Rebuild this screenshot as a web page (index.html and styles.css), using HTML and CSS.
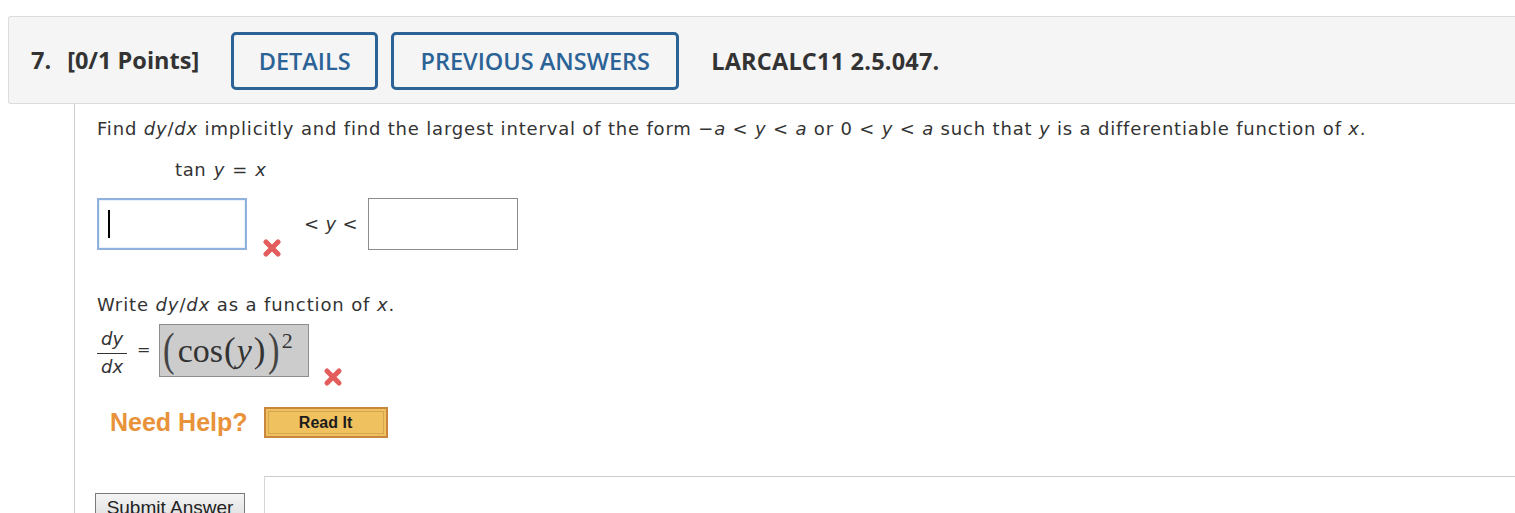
FILE: index.html
```html
<!DOCTYPE html>
<html>
<head>
<meta charset="utf-8">
<link rel="stylesheet" href="styles.css">
</head>
<body>
<div class="qhead">
  <div class="qnum"><span class="qn">7.</span>[0/1 Points]</div>
  <div class="qbtn btn-details">DETAILS</div>
  <div class="qbtn btn-prev">PREVIOUS ANSWERS</div>
  <div class="qref">LARCALC11 2.5.047.</div>
</div>
<div class="qbody">
  <p class="line1">Find <i>dy</i>/<i>dx</i> implicitly and find the largest interval of the form &minus;<i>a</i> &lt; <i>y</i> &lt; <i>a</i> or 0 &lt; <i>y</i> &lt; <i>a</i> such that <i>y</i> is a differentiable function of <i>x</i>.</p>
  <p class="eq">tan <i>y</i> = <i>x</i></p>
  <div class="irow">
    <div class="ibox focused"><span class="caret"></span></div>
    <svg class="xmark" viewBox="0 0 20 20" width="20" height="20"><path d="M4 4 L16 16 M16 4 L4 16" stroke="#e35d5d" stroke-width="5" stroke-linecap="round" fill="none"/></svg>
    <span class="between">&lt; <i>y</i> &lt;</span>
    <div class="ibox"></div>
  </div>
  <p class="line2">Write <i>dy</i>/<i>dx</i> as a function of <i>x</i>.</p>
  <div class="frow">
    <div class="frac"><span class="num"><i>dy</i></span><span class="den"><i>dx</i></span></div>
    <span class="equals">=</span>
    <div class="ansbox"><span class="bigp">(</span><span class="fn">cos</span><span class="mp">(</span><i class="mv">y</i><span class="mp">)</span><span class="bigp">)</span><sup class="sup">2</sup></div>
    <svg class="xmark" viewBox="0 0 20 20" width="20" height="20"><path d="M4 4 L16 16 M16 4 L4 16" stroke="#e35d5d" stroke-width="5" stroke-linecap="round" fill="none"/></svg>
  </div>
  <div class="hrow">
    <span class="needhelp">Need Help?</span>
    <div class="readit"><span>Read It</span></div>
  </div>
  <div class="srow">
    <div class="submit">Submit Answer</div>
    <div class="feedback"></div>
  </div>
</div>
</body>
</html>
```
FILE: styles.css
```css
html, body {
  margin: 0;
  padding: 0;
  background: #fff;
  overflow: hidden;
}
body {
  height: 513px;
}
.qhead {
  margin: 16px 0 0 8px;
  height: 86px;
  border: 1px solid #dcdcdc;
  border-right: none;
  border-radius: 3px 0 0 3px;
  background: #f5f5f5;
  display: flex;
  align-items: center;
  padding-left: 22px;
  font-family: "Open Sans", "Liberation Sans", sans-serif;
  box-sizing: content-box;
}
.qnum {
  font-weight: 700;
  font-size: 23.5px;
  color: #333;
  margin-right: 32px;
  margin-top: 0px;
  display: flex;
}
.qn {
  margin-right: 16px;
}
.qbtn {
  height: 52px;
  border: 3px solid #2b6396;
  border-radius: 5px;
  color: #2b6396;
  font-size: 23.5px;
  font-weight: 600;
  display: flex;
  align-items: center;
  justify-content: center;
  margin-top: 2px;
}
.btn-details {
  width: 141px;
  margin-right: 13px;
}
.btn-prev {
  width: 282px;
  margin-right: 32px;
}
.qref {
  font-weight: 700;
  font-size: 23.5px;
  color: #333;
  margin-top: 2px;
  letter-spacing: 0.2px;
}
.qbody {
  margin-left: 74px;
  border-left: 1px solid #cfcfcf;
  padding-left: 22px;
  padding-top: 13px;
  height: 420px;
  font-family: "DejaVu Sans", Verdana, sans-serif;
  font-size: 18px;
  color: #333;
  box-sizing: border-box;
}
.qbody p {
  margin: 0;
  line-height: 24px;
}
.line1 {
  letter-spacing: 0.82px;
}
.eq {
  margin-top: 17px !important;
  padding-left: 78px;
  letter-spacing: 0.6px;
  word-spacing: 1px;
}
.irow {
  margin-top: 16px;
  display: flex;
  align-items: flex-start;
  height: 60px;
}
.ibox {
  width: 150px;
  height: 52px;
  box-sizing: border-box;
  border: 1px solid #8c8c8c;
  background: #fff;
  display: flex;
  align-items: center;
  padding-left: 9px;
}
.ibox.focused {
  border: 2px solid #8fb1dc;
  box-shadow: inset 0 0 2px #b8cfee;
}
.caret {
  width: 1.5px;
  height: 28px;
  background: #000;
}
.irow .xmark {
  margin-left: 15px;
  margin-top: 40px;
}
.between {
  margin-left: 22px;
  margin-top: 15px;
  margin-right: 10px;
  letter-spacing: 0.3px;
}
.line2 {
  margin-top: 35px !important;
  letter-spacing: 0.88px;
}
.frow {
  margin-top: 7px;
  display: flex;
  align-items: flex-start;
  height: 64px;
}
.frac {
  display: flex;
  flex-direction: column;
  align-items: center;
  width: 30px;
  margin-top: 3px;
}
.frac .num {
  line-height: 24px;
  border-bottom: 1.5px solid #333;
  width: 30px;
  text-align: center;
  padding-bottom: 2px;
}
.frac .den {
  line-height: 24px;
  padding-top: 1px;
}
.equals {
  margin-left: 10px;
  margin-top: 16px;
  font-size: 16px;
}
.ansbox {
  margin-left: 9px;
  width: 150px;
  height: 53px;
  box-sizing: border-box;
  background: #cccccc;
  border: 1px solid #8d8d8d;
  font-family: "Liberation Serif", "DejaVu Serif", serif;
  color: #333;
  display: flex;
  align-items: center;
  padding-left: 1px;
  overflow: hidden;
}
.bigp {
  font-size: 46px;
  line-height: 44px;
  display: inline-block;
  transform: scaleX(0.75);
  margin-top: -2px;
  font-weight: 300;
  color: #444;
}
.fn {
  font-size: 34px;
  line-height: 40px;
  margin-left: 1px;
}
.mp {
  font-size: 35px;
  line-height: 40px;
  margin: 0 1px;
}
.mv {
  font-size: 34px;
  line-height: 40px;
  margin-right: 1px;
}
.sup {
  font-size: 22px;
  align-self: flex-start;
  margin-top: 5px;
  margin-left: 0px;
  line-height: 1;
}
.frow .xmark {
  margin-left: 14px;
  margin-top: 43px;
}
.hrow {
  margin-top: 19px;
  display: flex;
  align-items: center;
  padding-left: 13px;
}
.needhelp {
  font-family: "Liberation Sans", Arial, sans-serif;
  font-weight: 700;
  font-size: 25px;
  color: #e8923a;
}
.readit {
  margin-left: 16px;
  width: 124px;
  height: 31px;
  box-sizing: border-box;
  background: #f0c15f;
  border: 2px solid #c9873e;
  padding: 2px;
  display: flex;
}
.readit span {
  flex: 1;
  border: 1px solid #d7a54f;
  display: flex;
  align-items: center;
  justify-content: center;
  font-family: "Liberation Sans", Arial, sans-serif;
  font-weight: 700;
  font-size: 16px;
  color: #1c1c1c;
}
.srow {
  margin-top: 38px;
  display: flex;
  align-items: flex-start;
}
.submit {
  margin-left: -2px;
  margin-top: 17px;
  width: 150px;
  height: 28px;
  box-sizing: border-box;
  border: 1px solid #7a7a7a;
  background: linear-gradient(#f4f4f4, #dedede);
  font-family: "Liberation Sans", Arial, sans-serif;
  font-size: 19px;
  color: #222;
  text-align: center;
  line-height: 28px;
}
.feedback {
  margin-left: 19px;
  flex: 1;
  height: 60px;
  border-top: 1px solid #cccccc;
  border-left: 1px solid #d6d6d6;
}
```
